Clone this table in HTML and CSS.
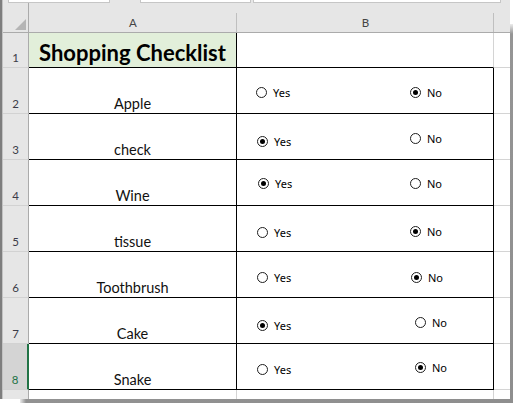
FILE: index.html
```html
<!DOCTYPE html>
<html>
<head>
<meta charset="utf-8">
<link rel="stylesheet" href="styles.css">
</head>
<body>
<div class="shot">
  <div class="win">
    <div class="edge"></div>
    <div class="main">
      <div class="topbar"><span class="box b1"></span><span class="box b2"></span><span class="box b3"></span></div>
      <div class="sheet">
        <div class="corner"><span class="tri"></span></div>
        <div class="ch sep">A</div>
        <div class="ch sep">B</div>
        <div class="ch"></div>

        <div class="rh">1</div>
        <div class="ca title">Shopping Checklist</div>
        <div class="cb first"></div>
        <div class="cc"></div>

        <div class="rh">2</div>
        <div class="ca">Apple</div>
        <div class="cb" style="--yx:19px;--yt:17px;--nx:173px;--nt:17px"><span class="opt yes"><i class="rd"></i>Yes</span><span class="opt no"><i class="rd on"></i>No</span></div>
        <div class="cc"></div>

        <div class="rh">3</div>
        <div class="ca">check</div>
        <div class="cb" style="--yx:20px;--yt:20px;--nx:173px;--nt:17px"><span class="opt yes"><i class="rd on"></i>Yes</span><span class="opt no"><i class="rd"></i>No</span></div>
        <div class="cc"></div>

        <div class="rh">4</div>
        <div class="ca">Wine</div>
        <div class="cb" style="--yx:21px;--yt:16px;--nx:173px;--nt:16px"><span class="opt yes"><i class="rd on"></i>Yes</span><span class="opt no"><i class="rd"></i>No</span></div>
        <div class="cc"></div>

        <div class="rh">5</div>
        <div class="ca">tissue</div>
        <div class="cb" style="--yx:20px;--yt:19px;--nx:173px;--nt:18px"><span class="opt yes"><i class="rd"></i>Yes</span><span class="opt no"><i class="rd on"></i>No</span></div>
        <div class="cc"></div>

        <div class="rh">6</div>
        <div class="ca">Toothbrush</div>
        <div class="cb" style="--yx:20px;--yt:18px;--nx:174px;--nt:18px"><span class="opt yes"><i class="rd"></i>Yes</span><span class="opt no"><i class="rd on"></i>No</span></div>
        <div class="cc"></div>

        <div class="rh">7</div>
        <div class="ca">Cake</div>
        <div class="cb" style="--yx:20px;--yt:20px;--nx:178px;--nt:17px"><span class="opt yes"><i class="rd on"></i>Yes</span><span class="opt no"><i class="rd"></i>No</span></div>
        <div class="cc"></div>

        <div class="rh sel">8</div>
        <div class="ca">Snake</div>
        <div class="cb" style="--yx:20px;--yt:18px;--nx:178px;--nt:16px"><span class="opt yes"><i class="rd"></i>Yes</span><span class="opt no"><i class="rd on"></i>No</span></div>
        <div class="cc"></div>

        <div class="rh last"></div>
        <div class="ce"></div>
        <div class="ce"></div>
        <div class="ce last"></div>
      </div>
    </div>
  </div>
  <div class="shadow-r"></div>
  <div class="shadow-b"></div>
</div>
</body>
</html>
```

FILE: styles.css
```css
html, body {
  margin: 0;
  padding: 0;
  background: #ffffff;
}

body {
  width: 513px;
  height: 403px;
  overflow: hidden;
  font-family: "Lato", "Open Sans", sans-serif;
  color: #000;
}

.shot {
  display: grid;
  grid-template-columns: 510px 3px;
  grid-template-rows: 399px 4px;
  background: #ffffff;
}

.win {
  grid-column: 1;
  grid-row: 1;
  display: flex;
  background: #ffffff;
}

.edge {
  width: 3px;
  box-sizing: border-box;
  border-left: 2px solid #7e7e7e;
  background: #c2c2c2;
  flex: none;
}

.main {
  flex: 1;
  display: flex;
  flex-direction: column;
  min-width: 0;
}

.topbar {
  height: 3px;
  display: flex;
  background: #e6e6e6;
  flex: none;
}

.box {
  height: 3px;
  box-sizing: border-box;
  background: #ffffff;
  border: 1px solid #c6c6c6;
  border-top: none;
}

.b1 { margin-left: 5px; width: 102px; }
.b2 { margin-left: 30px; width: 111px; }
.b3 { margin-left: 2px; width: 248px; }

.sheet {
  flex: 1;
  display: grid;
  grid-template-columns: 26px 208px 257px 16px;
  grid-template-rows: 30px 35px repeat(7, 46px) 9px;
}

.sheet > div {
  box-sizing: border-box;
  min-width: 0;
}

/* headers */
.corner {
  background: #e6e6e6;
  border-right: 1px solid #ababab;
  border-bottom: 1px solid #ababab;
  display: flex;
  justify-content: flex-end;
  align-items: flex-end;
  padding: 0 2px 2px 0;
}

.tri {
  width: 0;
  height: 0;
  border-left: 11px solid transparent;
  border-bottom: 11px solid #b5b5b5;
}

.ch {
  background-color: #e6e6e6;
  border-bottom: 1px solid #ababab;
  display: flex;
  justify-content: center;
  align-items: center;
  padding-top: 10px;
  font-size: 11.5px;
  color: #444;
}

.ch.sep {
  background-image: linear-gradient(#bfbfbf, #bfbfbf);
  background-size: 1px 19px;
  background-position: right bottom;
  background-repeat: no-repeat;
}

.rh {
  background: #e6e6e6;
  border-right: 1px solid #ababab;
  border-bottom: 1px solid #d2d2d2;
  display: flex;
  justify-content: center;
  align-items: flex-end;
  padding-bottom: 2px;
  font-size: 11.5px;
  line-height: 14px;
  color: #3c3c48;
}

.rh.sel {
  background: #d4d4d4;
  color: #217346;
  border-right: 2px solid #217346;
}

.rh.last {
  border-bottom: none;
}

/* cells */
.ca {
  border-right: 1px solid #000;
  border-bottom: 1px solid #000;
  display: flex;
  justify-content: center;
  align-items: flex-end;
  padding-bottom: 2px;
  font-size: 14.5px;
  line-height: 15px;
  color: #111;
}

.ca.title {
  background: #e2efda;
  font-weight: 700;
  font-size: 22px;
  line-height: 24px;
  padding-bottom: 2px;
  color: #000;
}

.cb {
  border-right: 1px solid #000;
  border-bottom: 1px solid #000;
  display: flex;
  align-items: flex-start;
}

.cb.first {
  border-right: 1px solid #d4d4d4;
}

.cc {
  border-bottom: 1px solid #d4d4d4;
}

.ce {
  border-right: 1px solid #d4d4d4;
}

.ce.last {
  border-right: none;
}

/* option buttons */
.opt {
  display: flex;
  align-items: center;
  gap: 6px;
  height: 15px;
  font-family: "Noto Sans", "DejaVu Sans", sans-serif;
  font-size: 11px;
  line-height: 15px;
  color: #000;
  flex: none;
}

.opt.yes {
  margin-left: var(--yx);
  margin-top: var(--yt);
  width: calc(var(--nx) - var(--yx));
}

.opt.no {
  margin-top: var(--nt);
}

.rd {
  width: 11px;
  height: 11px;
  box-sizing: border-box;
  border: 1px solid #1e1e1e;
  border-radius: 50%;
  background: #fff;
  display: grid;
  place-items: center;
  flex: none;
}

.rd.on::after {
  content: "";
  width: 5px;
  height: 5px;
  border-radius: 50%;
  background: #000;
}

/* window shadow */
.shadow-r {
  grid-column: 2;
  grid-row: 1 / 3;
  margin-top: 24px;
  background: linear-gradient(to bottom, #ececec, #959595 10px, #8e8e8e);
}

.shadow-b {
  grid-column: 1;
  grid-row: 2;
  margin-left: 20px;
  background: linear-gradient(to right, #ececec, #929292 6px, #8e8e8e);
}
```
